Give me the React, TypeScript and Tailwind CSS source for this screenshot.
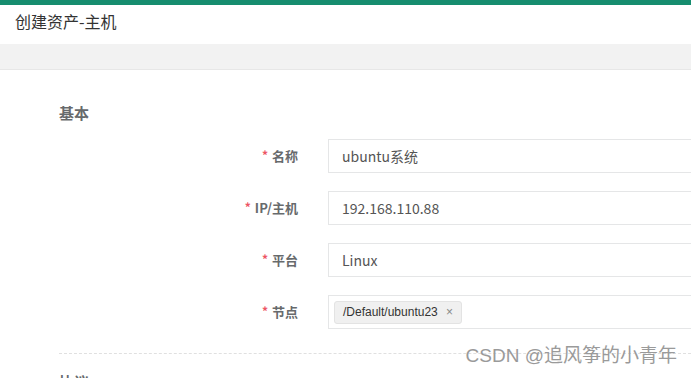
import React from "react";

const fields = [
  { id: 1, label: "名称", value: "ubuntu系统" },
  { id: 2, label: "IP/主机", value: "192.168.110.88" },
  { id: 3, label: "平台", value: "Linux" },
];

const font = "font-['Microsoft_YaHei','Noto_Sans_CJK_SC',sans-serif]";

const Label = ({ text }: { text: string }) => (
  <div className="w-[328px] flex items-center justify-end pr-[30px] shrink-0 text-[13px] font-bold text-[#676a6c]">
    <span className="text-[#ed5565] text-[12px] mr-[4px] mt-[-3px]">*</span>
    {text}
  </div>
);

const App: React.FC = () => {
  return (
    <div className={`w-[691px] h-[378px] overflow-hidden bg-white ${font}`}>
      <div className="h-[5px] bg-[#168d6f]" />
      <div className="h-[39px] flex items-start pl-[15px] pt-[4px] text-[16px] text-[#333]">
        创建资产-主机
      </div>
      <div className="h-[26px] bg-[#f2f2f2] border-b border-[#e7e7e7]" />

      <div className="pl-[59px]">
        <div className="pt-[32px] h-[69px] text-[15px] font-bold text-[#676a6c]">基本</div>

        <div className="ml-[-59px] flex flex-col gap-[18px]">
          {fields.map((f) => (
            <div key={f.id} className="flex items-center h-[34px]">
              <Label text={f.label} />
              <div className="flex-1 h-[34px] border border-[#e5e6e7] border-r-0 flex items-center pl-[13px] text-[14px] text-[#555]">
                {f.value}
              </div>
            </div>
          ))}

          <div className="flex items-center h-[34px]">
            <Label text="节点" />
            <div className="flex-1 h-[34px] border border-[#e5e6e7] border-r-0 flex items-center pl-[5px]">
              <div className="h-[23px] w-[128px] flex items-center justify-between px-[8px] bg-[#f0f0f0] border border-[#e3e3e3] rounded-[3px] text-[12px] text-[#333] font-['Liberation_Sans',sans-serif]">
                <span>/Default/ubuntu23</span>
                <span className="text-[#888] text-[12px]">×</span>
              </div>
            </div>
          </div>
        </div>

        <div className="relative mt-[24px] border-t border-dashed border-[#e0e0e0]">
          <span className="absolute right-[14px] top-[-12px] text-[19px] text-[#9a9a9a] font-['Liberation_Sans','Noto_Sans_CJK_SC',sans-serif]">
            CSDN @追风筝的小青年
          </span>
        </div>

        <div className="pt-[17px] text-[15px] font-bold text-[#676a6c]">协议</div>
      </div>
    </div>
  );
};

export default App;
